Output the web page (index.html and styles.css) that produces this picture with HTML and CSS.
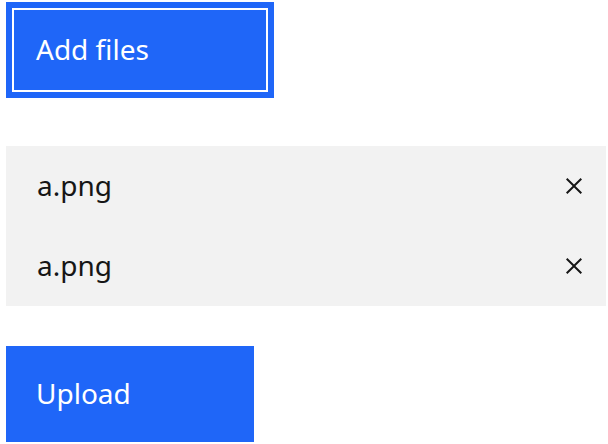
FILE: index.html
```html
<!DOCTYPE html>
<html lang="en">
<head>
<meta charset="utf-8">
<title>File uploader</title>
<link rel="stylesheet" href="styles.css">
</head>
<body>
<div class="uploader">
  <button class="btn btn-add btn-focus" type="button">Add files</button>
  <ul class="file-list">
    <li class="file-row">
      <span class="file-name">a.png</span>
      <button class="remove" type="button" aria-label="Remove a.png">
        <svg viewBox="0 0 16 16" width="32" height="32"><path d="M12 4.7L11.3 4 8 7.3 4.7 4 4 4.7 7.3 8 4 11.3 4.7 12 8 8.7 11.3 12 12 11.3 8.7 8z"/></svg>
      </button>
    </li>
    <li class="file-row">
      <span class="file-name">a.png</span>
      <button class="remove" type="button" aria-label="Remove a.png">
        <svg viewBox="0 0 16 16" width="32" height="32"><path d="M12 4.7L11.3 4 8 7.3 4.7 4 4 4.7 7.3 8 4 11.3 4.7 12 8 8.7 11.3 12 12 11.3 8.7 8z"/></svg>
      </button>
    </li>
  </ul>
  <button class="btn btn-upload" type="button">Upload</button>
</div>
</body>
</html>
```
FILE: styles.css
```css
html, body {
  margin: 0;
  padding: 0;
  background: #fff;
}
body {
  font-family: "Noto Sans", sans-serif;
  color: #161616;
}
.uploader {
  display: flex;
  flex-direction: column;
  align-items: flex-start;
  padding: 2px 2px 0 6px;
}
.btn {
  display: flex;
  align-items: center;
  box-sizing: border-box;
  height: 96px;
  margin: 0;
  border: 0;
  background: #1f66f8;
  color: #fff;
  font-family: inherit;
  font-size: 28px;
  padding: 0 0 2px 30px;
  text-align: left;
  cursor: pointer;
}
.btn-add {
  width: 268px;
}
.btn-focus {
  border: 6px solid #1f66f8;
  box-shadow: inset 0 0 0 2px #fff;
  padding-left: 24px;
}
.btn-upload {
  width: 248px;
  margin-top: 40px;
}
.file-list {
  list-style: none;
  margin: 48px 0 0;
  padding: 0;
  align-self: stretch;
  background: #f2f2f2;
}
.file-row {
  display: flex;
  align-items: center;
  justify-content: space-between;
  height: 80px;
  padding: 0 16px 0 31px;
}
.file-name {
  font-size: 28px;
  line-height: 40px;
  padding-bottom: 2px;
}
.remove {
  display: flex;
  width: 32px;
  height: 32px;
  padding: 0;
  margin: 0;
  border: 0;
  background: none;
  cursor: pointer;
}
.remove svg {
  fill: #161616;
}
```
